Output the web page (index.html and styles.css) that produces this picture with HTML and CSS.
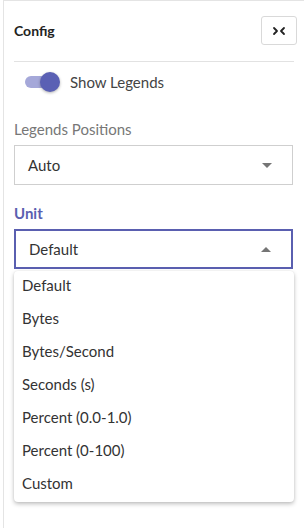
FILE: index.html
```html
<!DOCTYPE html>
<html lang="en">
<head>
    <meta charset="UTF-8">
    <meta name="viewport" content="width=device-width, initial-scale=1.0">
    <title>Config</title>
    <link rel="stylesheet" href="styles.css">
</head>
<body>
    <aside class="panel">
        <header class="panel-header">
            <h2>Config</h2>
            <button class="collapse-btn" aria-label="Collapse">
                <svg width="14" height="10" viewBox="0 0 14 10">
                    <path d="M2 2 L5 5 L2 8" fill="none" stroke="#222" stroke-width="1.8" stroke-linecap="round" stroke-linejoin="round"/>
                    <path d="M12 2 L9 5 L12 8" fill="none" stroke="#222" stroke-width="1.8" stroke-linecap="round" stroke-linejoin="round"/>
                </svg>
            </button>
        </header>

        <div class="toggle-row">
            <span class="switch">
                <span class="track"></span>
                <span class="knob"></span>
            </span>
            <span class="toggle-label">Show Legends</span>
        </div>

        <div class="field">
            <label class="field-label">Legends Positions</label>
            <div class="select">
                <span>Auto</span>
                <span class="arrow down"></span>
            </div>
        </div>

        <div class="field open">
            <label class="field-label">Unit</label>
            <div class="select">
                <span>Default</span>
                <span class="arrow up"></span>
            </div>
            <ul class="menu">
                <li>Default</li>
                <li>Bytes</li>
                <li>Bytes/Second</li>
                <li>Seconds (s)</li>
                <li>Percent (0.0-1.0)</li>
                <li>Percent (0-100)</li>
                <li>Custom</li>
            </ul>
        </div>
    </aside>
</body>
</html>
```

FILE: styles.css
```css
* {
    margin: 0;
    padding: 0;
    box-sizing: border-box;
    font-family: Lato, 'Open Sans', sans-serif;
}

body {
    background: #fff;
    color: #333;
}

.panel {
    margin-left: 3px;
    height: 528px;
    border-left: 1px solid #e4e4e4;
    border-top: 1px solid #e4e4e4;
    padding: 15px 10px 0 10px;
}

.panel-header {
    display: flex;
    justify-content: space-between;
    align-items: center;
    padding-bottom: 16px;
    border-bottom: 1px solid #e2e2e2;
}

.panel-header h2 {
    font-size: 14px;
    font-weight: 700;
    color: #222;
}

.collapse-btn {
    width: 36px;
    height: 29px;
    margin-right: -3px;
    background: #fff;
    border: 1px solid #d9d9d9;
    border-radius: 3px;
    display: flex;
    align-items: center;
    justify-content: center;
}

.toggle-row {
    display: flex;
    align-items: center;
    height: 40px;
    padding-left: 11px;
}

.switch {
    position: relative;
    width: 35px;
    height: 20px;
    margin-right: 10px;
}

.track {
    position: absolute;
    left: 0;
    top: 4px;
    width: 31px;
    height: 12px;
    border-radius: 6px;
    background: #a5a8d9;
}

.knob {
    position: absolute;
    right: 0;
    top: 0;
    width: 20px;
    height: 20px;
    border-radius: 50%;
    background: #5a60b4;
    box-shadow: 0 1px 3px rgba(0,0,0,0.3);
}

.toggle-label {
    font-size: 15px;
    color: #444;
}

.field {
    margin-top: 18px;
}

.field-label {
    display: block;
    font-size: 15px;
    line-height: 18px;
    color: #777;
    margin-bottom: 7px;
}

.select {
    display: flex;
    justify-content: space-between;
    align-items: center;
    height: 40px;
    margin-right: 1px;
    padding: 0 20px 0 13px;
    border: 1.5px solid #cfcfcf;
    font-size: 15px;
    color: #333;
}

.arrow {
    width: 0;
    height: 0;
    border-left: 5px solid transparent;
    border-right: 5px solid transparent;
}

.arrow.down {
    border-top: 5px solid #757575;
}

.arrow.up {
    border-bottom: 5px solid #757575;
}

.field.open {
    margin-top: 19px;
}

.field.open .field-label {
    color: #5a5fb0;
    font-weight: 700;
}

.field.open .select {
    border: 2px solid #5a5fb0;
}

.menu {
    list-style: none;
    margin-top: 2px;
    background: #fff;
    border-radius: 4px;
    box-shadow: 0 2px 4px rgba(0,0,0,0.25), 0 0 2px rgba(0,0,0,0.08);
}

.menu li {
    height: 33px;
    line-height: 28px;
    padding-left: 8px;
    font-size: 15px;
    color: #333;
}
```
